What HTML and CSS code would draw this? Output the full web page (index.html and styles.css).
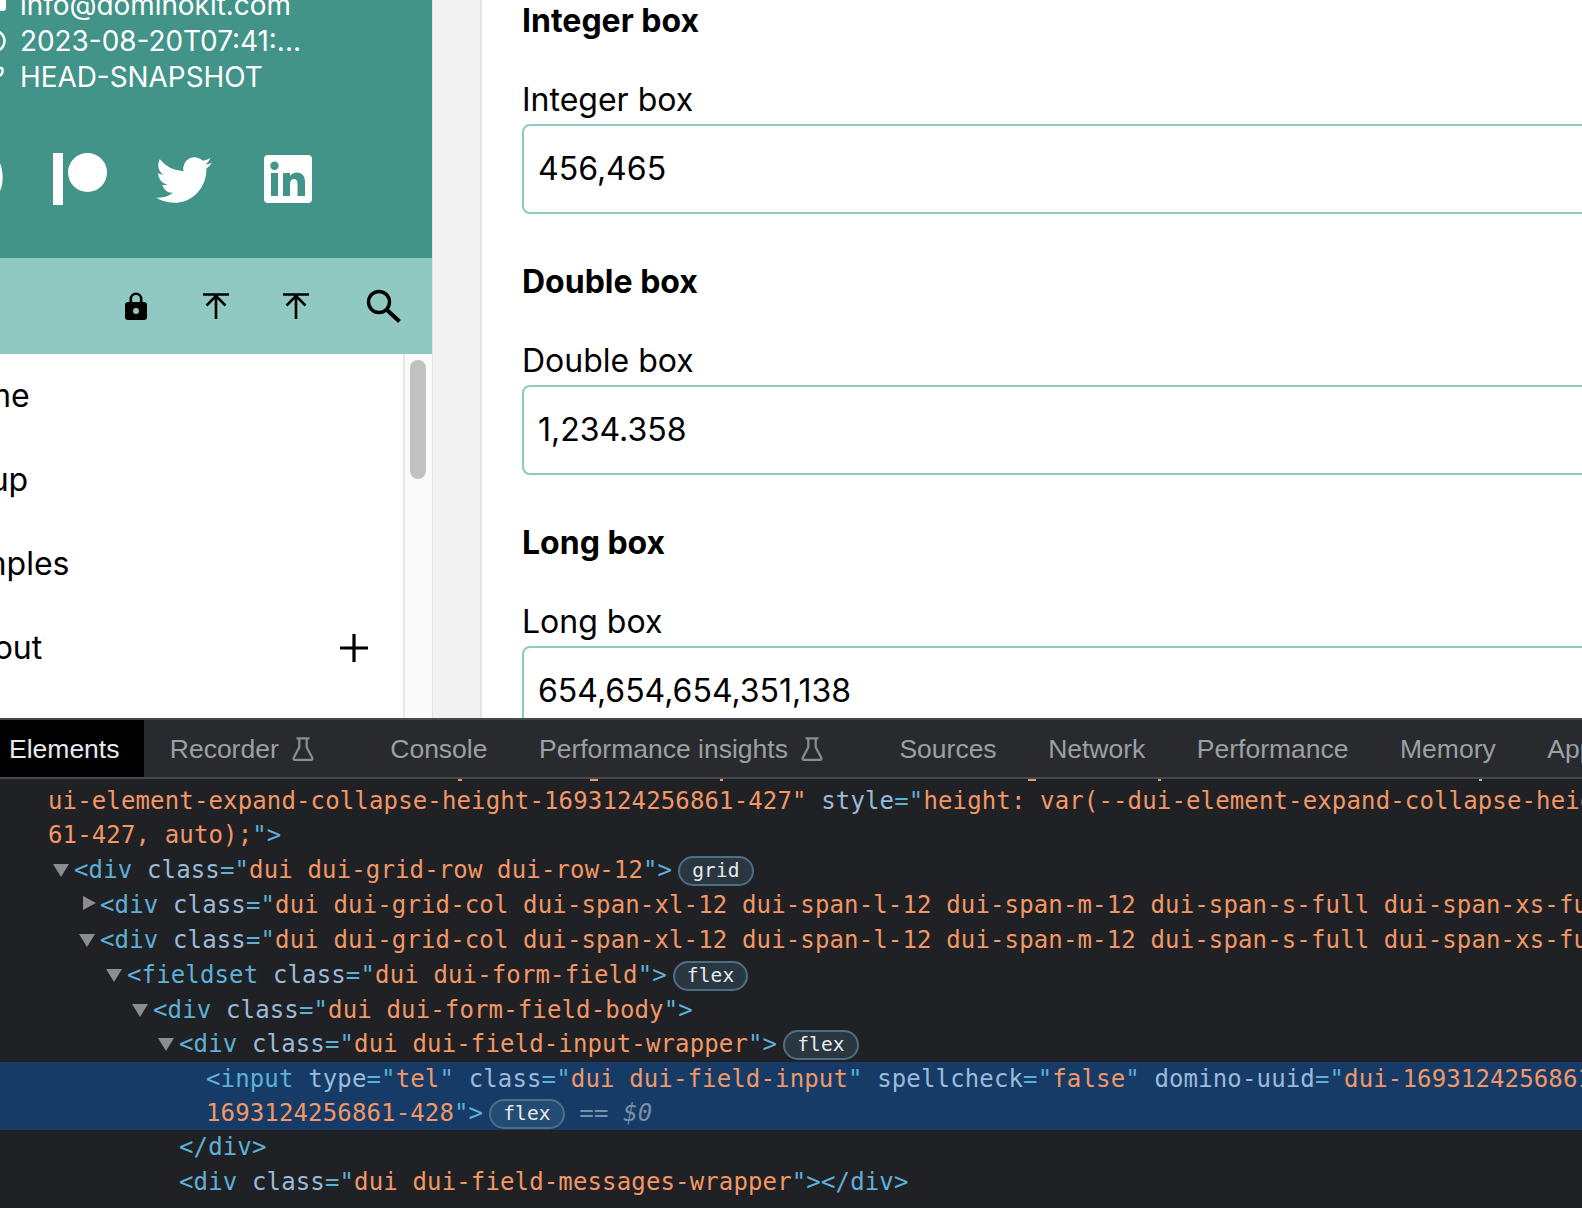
FILE: index.html
```html
<!DOCTYPE html>
<html lang="en">
<head>
    <meta charset="UTF-8">
    <meta name="viewport" content="width=device-width, initial-scale=1.0">
    <title>Number boxes</title>
    <link rel="stylesheet" href="styles.css">
</head>
<body>
    <div class="page">
        <aside class="sidebar">
            <div class="brand">
                <ul class="info-list">
                    <li>
                        <svg class="info-icon" viewBox="0 0 14 28"><path d="M0 0h3a3 3 0 0 1 3 3v14a3 3 0 0 1-3 3H0z" fill="#fff"/></svg>
                        <span>info@dominokit.com</span>
                    </li>
                    <li>
                        <svg class="info-icon" viewBox="0 0 14 28"><circle cx="-6" cy="14" r="10.500" fill="none" stroke="#fff" stroke-width="2.400"/></svg>
                        <span>2023-08-20T07:41:...</span>
                    </li>
                    <li>
                        <svg class="info-icon" viewBox="0 0 14 28"><path d="M-3 5h4a1.500 1.500 0 0 1 1.500 1.500v3L0 13" fill="none" stroke="#fff" stroke-width="2.400"/></svg>
                        <span>HEAD-SNAPSHOT</span>
                    </li>
                </ul>
                <div class="socials">
                    <svg class="social-github" viewBox="0 0 5 52"><path d="M0 10C3 17 4 30 0 38z" fill="#fff"/></svg>
                    <svg class="social-patreon" viewBox="0 0 54 52"><rect x="0" y="0" width="10" height="52" fill="#fff"/><circle cx="34.500" cy="19.500" r="19.500" fill="#fff"/></svg>
                    <svg class="social-twitter" viewBox="0 0 24 24"><path fill="#fff" d="M23.950 4.570a10 10 0 0 1-2.820.770 4.960 4.960 0 0 0 2.160-2.720c-.950.550-2 .950-3.120 1.180a4.920 4.920 0 0 0-8.380 4.480A13.940 13.940 0 0 1 1.640 3.160a4.820 4.820 0 0 0-.670 2.470c0 1.710.870 3.210 2.190 4.100a4.900 4.900 0 0 1-2.230-.610v.060a4.920 4.920 0 0 0 3.950 4.830 4.940 4.940 0 0 1-2.210.080 4.940 4.940 0 0 0 4.600 3.420A9.870 9.870 0 0 1 0 19.540a14 14 0 0 0 7.560 2.210c9.050 0 14-7.500 14-13.980 0-.210 0-.420-.020-.630a9.940 9.940 0 0 0 2.410-2.570z"/></svg>
                    <svg class="social-linkedin" viewBox="0 0 48 48"><path fill="#fff" fill-rule="evenodd" d="M4 0h40a4 4 0 0 1 4 4v40a4 4 0 0 1-4 4H4a4 4 0 0 1-4-4V4a4 4 0 0 1 4-4zM7 18v23h7V18zM10.500 6.500a4.200 4.200 0 1 0 0 8.400 4.200 4.200 0 0 0 0-8.400zM19 18v23h7V29c0-3 1.500-5 4-5s3.500 2 3.500 5v12H41V27c0-6-3-9.500-8-9.500-3 0-5.500 1.500-7 3.500v-3z"/></svg>
                </div>
            </div>
            <div class="toolbar">
                <svg class="tool-lock" viewBox="0 0 22 28"><path d="M3 10h1.500V7a6.500 6.500 0 0 1 13 0v3H19a3 3 0 0 1 3 3v12a3 3 0 0 1-3 3H3a3 3 0 0 1-3-3V13a3 3 0 0 1 3-3zm4.100 0h7.800V7a3.900 3.900 0 0 0-7.800 0zM11 16a3 3 0 1 0 0 6 3 3 0 0 0 0-6z" fill-rule="evenodd"/></svg>
                <svg class="tool-arrow" viewBox="0 0 26 26"><path d="M0 1.500h26M13 26V3M3.500 12.500 13 3l9.500 9.500" fill="none" stroke="#000" stroke-width="2.600"/></svg>
                <svg class="tool-arrow" viewBox="0 0 26 26"><path d="M0 1.500h26M13 26V3M3.500 12.500 13 3l9.500 9.500" fill="none" stroke="#000" stroke-width="2.600"/></svg>
                <svg class="tool-search" viewBox="0 0 35 34"><circle cx="13" cy="13" r="10.500" fill="none" stroke="#000" stroke-width="3.400"/><path d="M20.500 20.500 33.500 32.500" fill="none" stroke="#000" stroke-width="4"/></svg>
            </div>
            <div class="nav-area">
                <nav class="nav">
                    <a class="nav-item">Home</a>
                    <a class="nav-item">Setup</a>
                    <a class="nav-item">Samples</a>
                    <a class="nav-item has-children"><span>About</span>
                        <svg class="nav-plus" viewBox="0 0 28 28"><path d="M14 0v28M0 14h28" fill="none" stroke="#000" stroke-width="3.200"/></svg>
                    </a>
                </nav>
                <div class="nav-scroll"><div class="nav-thumb"></div></div>
            </div>
        </aside>
        <div class="gutter"></div>
        <main class="content">
            <section class="box-section">
                <h3>Integer box</h3>
                <label>Integer box</label>
                <input type="tel" value="456,465" spellcheck="false">
            </section>
            <section class="box-section">
                <h3>Double box</h3>
                <label>Double box</label>
                <input type="tel" value="1,234.358" spellcheck="false">
            </section>
            <section class="box-section">
                <h3>Long box</h3>
                <label>Long box</label>
                <input type="tel" value="654,654,654,351,138" spellcheck="false">
            </section>
        </main>
    </div>

    <div class="devtools">
        <div class="tabs">
            <span class="tab active">Elements</span>
            <span class="tab">Recorder <svg class="flask" viewBox="0 0 24 26"><path d="M5 1.500h14M8 2v9L2 22.500a1.500 1.500 0 0 0 1.300 2.300h17.400a1.500 1.500 0 0 0 1.300-2.300L16 11V2" fill="none" stroke="#8a8d91" stroke-width="2.400"/></svg></span>
            <span class="tab">Console</span>
            <span class="tab">Performance insights <svg class="flask" viewBox="0 0 24 26"><path d="M5 1.500h14M8 2v9L2 22.500a1.500 1.500 0 0 0 1.300 2.300h17.400a1.500 1.500 0 0 0 1.300-2.300L16 11V2" fill="none" stroke="#8a8d91" stroke-width="2.400"/></svg></span>
            <span class="tab">Sources</span>
            <span class="tab">Network</span>
            <span class="tab">Performance</span>
            <span class="tab">Memory</span>
            <span class="tab">Application</span>
        </div>
        <div class="code">
            <!-- descenders of the line scrolled out of view -->
            <div class="tails"><i></i><i></i><i></i><i></i><i></i><i></i></div>
            <div class="line indent-0"><span class="v">ui-element-expand-collapse-height-1693124256861-427"</span> <span class="n">style</span><span class="p">="</span><span class="v">height: var(--dui-element-expand-collapse-height-16931242568</span></div>
            <div class="line wrapped indent-0"><span class="v">61-427, auto);</span><span class="p">"&gt;</span></div>
            <div class="line indent-1"><i class="arrow open"></i><span class="p">&lt;div</span> <span class="n">class</span><span class="p">="</span><span class="v">dui dui-grid-row dui-row-12</span><span class="p">"&gt;</span><span class="badge">grid</span></div>
            <div class="line indent-2"><i class="arrow"></i><span class="p">&lt;div</span> <span class="n">class</span><span class="p">="</span><span class="v">dui dui-grid-col dui-span-xl-12 dui-span-l-12 dui-span-m-12 dui-span-s-full dui-span-xs-full</span></div>
            <div class="line indent-2"><i class="arrow open"></i><span class="p">&lt;div</span> <span class="n">class</span><span class="p">="</span><span class="v">dui dui-grid-col dui-span-xl-12 dui-span-l-12 dui-span-m-12 dui-span-s-full dui-span-xs-full</span></div>
            <div class="line indent-3"><i class="arrow open"></i><span class="p">&lt;fieldset</span> <span class="n">class</span><span class="p">="</span><span class="v">dui dui-form-field</span><span class="p">"&gt;</span><span class="badge">flex</span></div>
            <div class="line indent-4"><i class="arrow open"></i><span class="p">&lt;div</span> <span class="n">class</span><span class="p">="</span><span class="v">dui dui-form-field-body</span><span class="p">"&gt;</span></div>
            <div class="line indent-5"><i class="arrow open"></i><span class="p">&lt;div</span> <span class="n">class</span><span class="p">="</span><span class="v">dui dui-field-input-wrapper</span><span class="p">"&gt;</span><span class="badge">flex</span></div>
            <div class="selected">
                <div class="line indent-6"><span class="p">&lt;input</span> <span class="n">type</span><span class="p">="</span><span class="v">tel</span><span class="p">"</span> <span class="n">class</span><span class="p">="</span><span class="v">dui dui-field-input</span><span class="p">"</span> <span class="n">spellcheck</span><span class="p">="</span><span class="v">false</span><span class="p">"</span> <span class="n">domino-uuid</span><span class="p">="</span><span class="v">dui-1693124256861-</span></div>
                <div class="line indent-6"><span class="v">1693124256861-428</span><span class="p">"&gt;</span><span class="badge">flex</span> <span class="eq">== <em>$0</em></span></div>
            </div>
            <div class="line indent-5"><span class="p">&lt;/div&gt;</span></div>
            <div class="line indent-5"><span class="p">&lt;div</span> <span class="n">class</span><span class="p">="</span><span class="v">dui dui-field-messages-wrapper</span><span class="p">"&gt;&lt;/div&gt;</span></div>
        </div>
    </div>
</body>
</html>
```

FILE: styles.css
```css
* {
    box-sizing: border-box;
}
html, body {
    height: 100%;
}
body {
    margin: 0;
    display: flex;
    flex-direction: column;
    overflow: hidden;
    background: #fff;
    color: #000;
    font-family: Inter, "Liberation Sans", sans-serif;
}
.page {
    height: 718px;
    display: flex;
    overflow: hidden;
    flex-shrink: 0;
}

/* sidebar */
.sidebar {
    width: 432px;
    flex-shrink: 0;
    display: flex;
    flex-direction: column;
    overflow: hidden;
}
.brand {
    height: 258px;
    background: #429488;
    color: #fff;
    flex-shrink: 0;
    overflow: hidden;
}
.info-list {
    list-style: none;
    margin: -13px 0 0;
    padding: 0;
    font-size: 27.900px;
    line-height: 36px;
}
.info-list li {
    display: flex;
    align-items: center;
    gap: 6px;
}
.info-icon {
    width: 14px;
    height: 28px;
    overflow: visible;
    flex-shrink: 0;
}
.socials {
    display: flex;
    align-items: flex-start;
    margin-top: 58px;
}
.socials svg {
    display: block;
    flex-shrink: 0;
}
.social-github {
    width: 5px;
    height: 52px;
    margin-right: 48px;
}
.social-patreon {
    width: 54px;
    height: 52px;
}
.social-twitter {
    width: 56px;
    height: 56px;
    margin: -1px 0 0 49px;
}
.social-linkedin {
    width: 48px;
    height: 48px;
    margin: 2px 0 0 52px;
}
.toolbar {
    height: 96px;
    background: #90c8c2;
    flex-shrink: 0;
    display: flex;
    align-items: center;
    padding-left: 125px;
}
.toolbar svg {
    display: block;
    flex-shrink: 0;
}
.tool-lock {
    width: 22px;
    height: 28px;
}
.tool-arrow {
    width: 26px;
    height: 26px;
    margin-left: 54px;
}
.tool-lock + .tool-arrow {
    margin-left: 56px;
}
.tool-search {
    width: 35px;
    height: 34px;
    margin-left: 57px;
}
.nav-area {
    flex: 1;
    display: flex;
    min-height: 0;
}
.nav {
    flex: 1;
    display: flex;
    flex-direction: column;
    padding: 0 32px 0 0;
    margin: -1px 0 0 -60px;
}
.nav-item {
    height: 84px;
    display: flex;
    align-items: center;
    justify-content: space-between;
    flex-shrink: 0;
    font-size: 32px;
}
.has-children span {
    margin-left: 12px;
}
.nav-plus {
    width: 28px;
    height: 28px;
    margin: 2px 3px 0 0;
}
.nav-scroll {
    width: 29px;
    padding: 6px 0 0 5px;
    background: #fafafa;
    border-left: 2px solid #e8e8e8;
}
.nav-thumb {
    width: 16px;
    height: 119px;
    background: #c1c1c1;
    border-radius: 8px;
}
.gutter {
    width: 50px;
    flex-shrink: 0;
    background: #f2f2f2;
    border-left: 1px solid #e4e4e4;
    border-right: 2px solid #e4e4e4;
}

/* form */
.content {
    flex: 1;
    min-width: 0;
    padding: 0 0 0 40px;
    overflow: hidden;
}
.box-section {
    width: 1200px;
    height: 261px;
    display: flex;
    flex-direction: column;
}
.box-section:first-child {
    margin-top: -5px;
}
h3 {
    margin: 0;
    font-size: 32px;
    font-weight: 700;
    line-height: 52px;
}
label {
    margin-top: 29px;
    font-size: 32px;
    line-height: 48px;
}
input {
    width: 100%;
    height: 90px;
    padding: 0 14px 2px;
    border: 2px solid #8fc9c3;
    border-radius: 8px;
    background: #fff;
    color: #000;
    font-family: inherit;
    font-size: 32px;
    outline: none;
}

/* devtools */
.devtools {
    flex: 1;
    min-height: 0;
    display: flex;
    flex-direction: column;
    background: #202124;
    border-top: 2px solid #46484c;
    overflow: hidden;
}
.tabs {
    height: 59px;
    flex-shrink: 0;
    display: flex;
    align-items: center;
    background: #292a2d;
    border-bottom: 2px solid #46484c;
    font-family: "Liberation Sans", Arial, sans-serif;
    font-size: 26.500px;
    color: #9aa0a6;
    white-space: nowrap;
    overflow: hidden;
}
.tab {
    height: 100%;
    flex-shrink: 0;
    display: flex;
    align-items: center;
    gap: 12px;
    padding: 2px 25.750px 0;
}
.tab.active {
    width: 144px;
    padding: 2px 0 0 9px;
    background: #000;
    color: #e8eaed;
}
.flask {
    width: 24px;
    height: 24px;
    margin: -2px 24px 0 0;
}
.code {
    flex: 1;
    min-height: 0;
    font-family: "DejaVu Sans Mono", monospace;
    font-size: 24px;
    letter-spacing: 0.140px;
    line-height: 34.800px;
    white-space: nowrap;
    overflow: hidden;
}
.tails {
    height: 4.800px;
    display: flex;
    align-items: flex-start;
}
.tails i {
    height: 2px;
    flex-shrink: 0;
    background: #f29766;
}
.tails i:nth-child(1) { margin-left: 458px; width: 4px; }
.tails i:nth-child(2) { margin-left: 128px; width: 8px; }
.tails i:nth-child(3) { margin-left: 122px; width: 3px; }
.tails i:nth-child(4) { margin-left: 305px; width: 8px; }
.tails i:nth-child(5) { margin-left: 122px; width: 3px; }
.tails i:nth-child(6) { margin-left: 318px; width: 3px; background: #9bbbdc; }
.line {
    height: 34.800px;
    position: relative;
    color: #5db0d7;
}
.line.wrapped {
    line-height: 32.800px;
}
.indent-0 { padding-left: 48px; }
.indent-1 { padding-left: 74px; }
.indent-2 { padding-left: 100px; }
.indent-3 { padding-left: 127px; }
.indent-4 { padding-left: 153px; }
.indent-5 { padding-left: 179px; }
.indent-6 { padding-left: 206px; }
.p { color: #5db0d7; }
.n { color: #9bbbdc; }
.v { color: #f29766; }
.selected {
    background: #163b66;
}
.selected .line {
    height: 34px;
    line-height: 34px;
}
.arrow {
    position: absolute;
    width: 0;
    height: 0;
    margin-left: -17px;
    margin-top: 8px;
    border-top: 7px solid transparent;
    border-bottom: 7px solid transparent;
    border-left: 13px solid #8a8d91;
}
.arrow.open {
    margin-left: -21px;
    margin-top: 11px;
    border-left: 8px solid transparent;
    border-right: 8px solid transparent;
    border-top: 13px solid #8a8d91;
    border-bottom: 0;
}
.badge {
    display: inline-block;
    height: 30px;
    line-height: 26px;
    margin-left: 6px;
    padding: 0 12px;
    border: 2px solid #4d6f85;
    border-radius: 15px;
    background: #2a3640;
    color: #e8eaed;
    font-size: 19.500px;
    vertical-align: middle;
}
.selected .badge {
    background: #234c75;
}
.eq {
    color: #7a8fa8;
}
.eq em {
    font-style: italic;
}
```
